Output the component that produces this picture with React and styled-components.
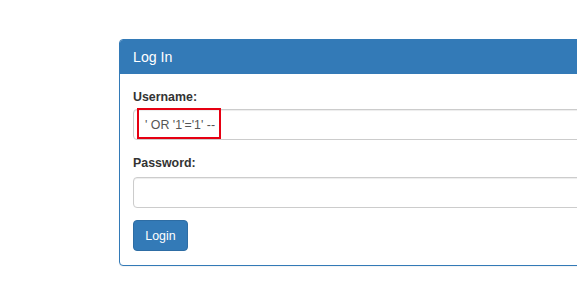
import styled, { createGlobalStyle } from 'styled-components'

const Global = createGlobalStyle`
  html, body {
    margin: 0;
    padding: 0;
    background: #fff;
    overflow: hidden;
  }
  body {
    font-family: "Liberation Sans", Arial, Helvetica, sans-serif;
    font-size: 12.4px;
    color: #333;
  }
`

const Page = styled.div`
  padding: 39px 0 0 119px;
  width: 577px;
  height: 287px;
  box-sizing: border-box;
`

const Panel = styled.div`
  width: 620px;
  border: 1px solid #337ab7;
  border-radius: 4px;
  background: #fff;
  box-shadow: 0 1px 1px rgba(0, 0, 0, 0.05);
`

const Heading = styled.div`
  background: #337ab7;
  color: #fff;
  height: 34px;
  padding: 0 13px;
  display: flex;
  align-items: center;
  font-size: 14.2px;
  border-radius: 3px 3px 0 0;
`

const Body = styled.div`
  padding: 15px 13px 14px;
`

const Group = styled.div`
  margin-bottom: ${p => p.last ? '12px' : '15px'};
`

const Label = styled.label`
  display: block;
  font-weight: bold;
  line-height: 16px;
  margin-bottom: ${p => p.gap}px;
`

const Field = styled.div`
  position: relative;
`

const Input = styled.input`
  display: block;
  width: 100%;
  box-sizing: border-box;
  height: 31px;
  padding: 5px 11px;
  font-family: inherit;
  font-size: 12.4px;
  color: #555;
  background: #fff;
  border: 1px solid #ccc;
  border-radius: 4px;
  box-shadow: inset 0 1px 1px rgba(0, 0, 0, 0.075);
  outline: none;
`

const Highlight = styled.span`
  position: absolute;
  left: 4px;
  top: -1px;
  width: 84px;
  height: 31px;
  box-sizing: border-box;
  border: 2px solid #e60012;
  pointer-events: none;
`

const Button = styled.button`
  display: block;
  width: 55px;
  height: 31px;
  padding: 0;
  font-family: inherit;
  font-size: 12.4px;
  color: #fff;
  background: #337ab7;
  border: 1px solid #2e6da4;
  border-radius: 4px;
`

export default function App() {
  return (
    <>
      <Global />
      <Page>
        <Panel>
          <Heading>Log In</Heading>
          <Body>
            <Group>
              <Label gap={4}>Username:</Label>
              <Field>
                <Input defaultValue="' OR '1'='1' --" />
                <Highlight />
              </Field>
            </Group>
            <Group last>
              <Label gap={6}>Password:</Label>
              <Input type="password" />
            </Group>
            <Button>Login</Button>
          </Body>
        </Panel>
      </Page>
    </>
  )
}
